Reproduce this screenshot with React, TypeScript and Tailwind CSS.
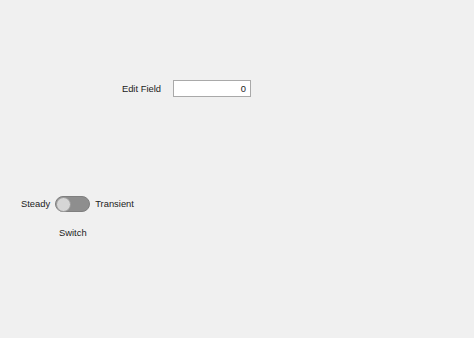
import React from 'react';

// MATLAB-style app figure: an edit field and a two-state switch
const App: React.FC = () => {
  return (
    <div
      className="w-[474px] h-[338px] bg-[#f0f0f0] text-[#222] text-[9.4px] leading-none flex flex-col whitespace-nowrap"
      style={{ fontFamily: '"Liberation Sans", Arial, sans-serif' }}
    >
      <div className="flex items-center pt-[80px] pl-[110px]">
        <span className="w-[51px] text-right">Edit Field</span>
        <div className="ml-[12px] w-[78px] h-[17px] bg-white border border-[#a9a9a9] flex items-center justify-end pr-[4px]">
          0
        </div>
      </div>

      <div className="flex items-center pt-[99px] pl-[21px]">
        <span>Steady</span>
        <div className="ml-[5px] w-[35px] h-[16px] rounded-full bg-[#8e8e8e] border border-[#7f7f7f] flex items-center">
          <div className="w-[15px] h-[15px] rounded-full bg-[#d6d6d6] border border-[#9a9a9a]" />
        </div>
        <span className="ml-[5px]">Transient</span>
      </div>

      <div className="pt-[16px] pl-[59px]">Switch</div>
    </div>
  );
};

export default App;
